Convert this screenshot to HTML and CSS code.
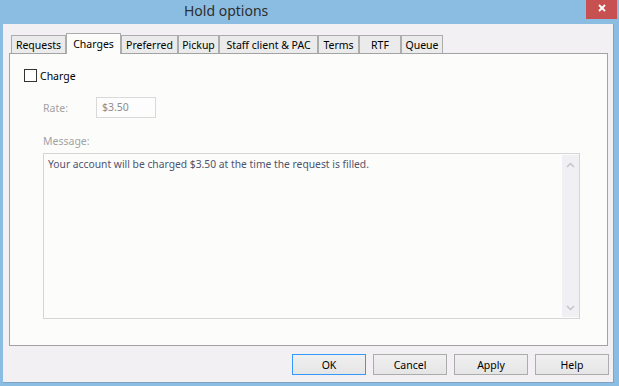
FILE: index.html
```html
<!DOCTYPE html>
<html lang="en">
<head>
    <meta charset="UTF-8">
    <title>Hold options</title>
    <link rel="stylesheet" href="styles.css">
</head>
<body>
    <div class="window">
        <div class="titlebar">
            <span class="title">Hold options</span>
            <div class="close-btn">
                <svg width="8" height="8" viewBox="0 0 8 8">
                    <path d="M1 1 L7 7 M7 1 L1 7" stroke="#fff" stroke-width="1.8" fill="none"/>
                </svg>
            </div>
        </div>
        <div class="client">
            <div class="tabs">
                <div class="tab tab-requests">Requests</div>
                <div class="tab tab-charges active">Charges</div>
                <div class="tab tab-preferred">Preferred</div>
                <div class="tab tab-pickup">Pickup</div>
                <div class="tab tab-staff">Staff client &amp; PAC</div>
                <div class="tab tab-terms">Terms</div>
                <div class="tab tab-rtf">RTF</div>
                <div class="tab tab-queue">Queue</div>
            </div>
            <div class="panel">
                <div class="check-row">
                    <span class="checkbox"></span>
                    <span>Charge</span>
                </div>
                <div class="rate-row">
                    <span class="field-label rate-label">Rate:</span>
                    <span class="rate-box">$3.50</span>
                </div>
                <div class="field-label msg-label">Message:</div>
                <div class="message-box">
                    <div class="message-text">Your account will be charged $3.50 at the time the request is filled.</div>
                    <div class="scrollbar">
                        <svg width="9" height="6" viewBox="0 0 9 6">
                            <path d="M1 5 L4.5 1.5 L8 5" stroke="#c4c4c4" stroke-width="1.5" fill="none"/>
                        </svg>
                        <svg width="9" height="6" viewBox="0 0 9 6">
                            <path d="M1 1 L4.5 4.5 L8 1" stroke="#c4c4c4" stroke-width="1.5" fill="none"/>
                        </svg>
                    </div>
                </div>
            </div>
            <div class="buttons">
                <div class="btn default">OK</div>
                <div class="btn">Cancel</div>
                <div class="btn">Apply</div>
                <div class="btn">Help</div>
            </div>
        </div>
    </div>
</body>
</html>
```

FILE: styles.css
```css
:root {
    --frame-color: #8bbde3;
    --client-bg: #f2f0f3;
    --panel-bg: #fcfdfb;
    --tab-border: #acacac;
}

* {
    box-sizing: border-box;
}

body {
    margin: 0;
    font-family: 'Noto Sans', 'Open Sans', sans-serif;
    font-size: 10.5px;
    color: #000;
}

.window {
    width: 619px;
    height: 386px;
    background: var(--frame-color);
    display: flex;
    flex-direction: column;
}

.titlebar {
    height: 24px;
    display: flex;
    align-items: flex-start;
}

.title {
    margin-left: 184px;
    font-size: 14px;
    line-height: 21px;
    color: #2e2e2e;
}

.close-btn {
    margin-left: auto;
    margin-right: 2px;
    width: 31px;
    height: 19px;
    background: #c75050;
    display: flex;
    justify-content: center;
    align-items: center;
    padding-bottom: 4px;
}

.client {
    flex: 1;
    margin: 0 5px 3px 3px;
    background: var(--client-bg);
    padding: 9px 4px 0 6px;
    border-right: 1px solid #7fa3c4;
    border-bottom: 1px solid #7fa3c4;
}

.tabs {
    display: flex;
    align-items: flex-end;
    height: 20px;
    padding-left: 2px;
}

.tab {
    height: 18px;
    border: 1px solid var(--tab-border);
    border-bottom: none;
    background: #ebebeb;
    display: flex;
    justify-content: center;
    align-items: center;
    padding-top: 1px;
    white-space: nowrap;
}

.tab.active {
    position: relative;
    z-index: 1;
    height: 21px;
    margin-bottom: -1px;
    padding-top: 0;
    padding-bottom: 1px;
    background: var(--panel-bg);
}

.tab-requests { width: 55px; }
.tab-charges { width: 55px; }
.tab-preferred { width: 57px; }
.tab-pickup { width: 41px; }
.tab-staff { width: 99px; }
.tab-terms { width: 41px; }
.tab-rtf { width: 42px; }
.tab-queue { width: 42px; }

.panel {
    width: 599px;
    height: 293px;
    border: 1px solid #a3a3a3;
    background: var(--panel-bg);
}

.check-row {
    display: flex;
    align-items: center;
    gap: 3px;
    height: 13px;
    margin: 15px 0 0 14px;
}

.checkbox {
    width: 13px;
    height: 13px;
    border: 1px solid #333;
    background: #fff;
}

.field-label {
    color: #a3a3a3;
    line-height: 14px;
}

.rate-row {
    display: flex;
    align-items: center;
    margin: 15px 0 0 33px;
}

.rate-label {
    width: 53px;
}

.rate-box {
    width: 60px;
    height: 21px;
    border: 1px solid #d9d9d9;
    background: #fdfdfd;
    color: #8d8d8d;
    padding-left: 5px;
    line-height: 19px;
}

.msg-label {
    margin: 16px 0 0 33px;
}

.message-box {
    width: 537px;
    height: 166px;
    margin: 5px 0 0 33px;
    border: 1px solid #d5d5d5;
    display: flex;
}

.message-text {
    flex: 1;
    padding: 3px 4px;
    font-size: 10.3px;
    line-height: 14px;
    color: #50536e;
}

.scrollbar {
    width: 17px;
    margin: 1px 0;
    background: #f0eff3;
    display: flex;
    flex-direction: column;
    justify-content: space-between;
    align-items: center;
    padding: 7px 0 6px;
}

.buttons {
    display: flex;
    justify-content: flex-end;
    gap: 7px;
    margin-top: 8px;
}

.btn {
    width: 74px;
    height: 21px;
    border: 1px solid var(--tab-border);
    background: linear-gradient(#f0f0f0, #e5e5e5);
    display: flex;
    justify-content: center;
    align-items: center;
}

.btn.default {
    border-color: #3399ff;
}
```
